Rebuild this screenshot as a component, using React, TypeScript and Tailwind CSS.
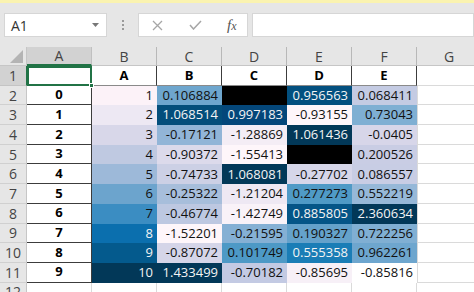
import React from "react";

type Cell = { v: string; bg: string; light?: boolean };

const W = "#ffffff";
const cols = ["A", "B", "C", "D", "E", "F", "G"];
const heads = ["", "A", "B", "C", "D", "E"];

// value, background, white text?
const data: Cell[][] = [
  [{ v: "1", bg: "#fcf2f8" }, { v: "0.106884", bg: "#6ea6ce" }, { v: "", bg: "#000000" }, { v: "0.956563", bg: "#03507f", light: true }, { v: "0.068411", bg: "#c4cbe3" }],
  [{ v: "2", bg: "#ede8f3" }, { v: "1.068514", bg: "#034e7b", light: true }, { v: "0.997183", bg: "#04477a", light: true }, { v: "-0.93155", bg: "#fef6fa" }, { v: "0.73043", bg: "#7fafd3" }],
  [{ v: "3", bg: "#d8d7e9" }, { v: "-0.17121", bg: "#92b5d7" }, { v: "-1.28869", bg: "#f4edf5" }, { v: "1.061436", bg: "#023858", light: true }, { v: "-0.0405", bg: "#d7d6e9" }],
  [{ v: "4", bg: "#bfc9e1" }, { v: "-0.90372", bg: "#dcdaeb" }, { v: "-1.55413", bg: "#fef6fa" }, { v: "", bg: "#000000" }, { v: "0.200526", bg: "#c9cde4" }],
  [{ v: "5", bg: "#9db9d9" }, { v: "-0.74733", bg: "#ccd0e5" }, { v: "1.068081", bg: "#023858", light: true }, { v: "-0.27702", bg: "#d6d6e9" }, { v: "0.086557", bg: "#c8cde4" }],
  [{ v: "6", bg: "#6ca4cd" }, { v: "-0.25322", bg: "#a7bedb" }, { v: "-1.21204", bg: "#eee8f3" }, { v: "0.277273", bg: "#4f9ac6" }, { v: "0.552219", bg: "#96b8d8" }],
  [{ v: "7", bg: "#3b8dc2" }, { v: "-0.46774", bg: "#bdc8e1" }, { v: "-1.42749", bg: "#f9f2f8" }, { v: "0.885805", bg: "#045587", light: true }, { v: "2.360634", bg: "#023858", light: true }],
  [{ v: "8", bg: "#0b6fae", light: true }, { v: "-1.52201", bg: "#fef6fa" }, { v: "-0.21595", bg: "#85b0d4" }, { v: "0.190327", bg: "#65a2cb" }, { v: "0.722256", bg: "#80afd3" }],
  [{ v: "9", bg: "#045a8d", light: true }, { v: "-0.87072", bg: "#d5d5e8" }, { v: "0.101749", bg: "#4d99c6" }, { v: "0.555358", bg: "#1a7db6", light: true }, { v: "0.962261", bg: "#6ea6ce" }],
  [{ v: "10", bg: "#023858", light: true }, { v: "1.433499", bg: "#023858", light: true }, { v: "-0.70182", bg: "#c3cae3" }, { v: "-0.85695", bg: "#f7f0f7" }, { v: "-0.85816", bg: W }],
];

function RowHead({ n, active }: { n: number; active?: boolean }) {
  return (
    <div
      className={
        "w-[27px] shrink-0 flex items-center justify-center border-b border-r text-[14px] text-[#444] " +
        (active ? "bg-[#d2d2d2] border-b-[#c4c4c4] border-r-[#217346]" : "bg-[#e6e6e6] border-b-[#d0d0d0] border-r-[#c6c6c6]")
      }
    >
      {n}
    </div>
  );
}

export default function App() {
  return (
    <div className="w-[474px] h-[292px] overflow-hidden bg-white font-['Open_Sans',sans-serif] text-black">
      <div className="h-[3px] bg-[#faf3b0]" />

      {/* formula bar */}
      <div className="h-[44px] bg-[#e6e6e6] flex items-start pt-[10px] pl-[4px]">
        <div className="w-[103px] h-[24px] bg-white border border-[#d6d6d6] flex items-center justify-between pl-[6px] pr-[7px]">
          <span className="text-[14px] text-[#333]">A1</span>
          <svg width="7" height="4" viewBox="0 0 7 4">
            <path d="M0 0h7L3.5 4z" fill="#777" />
          </svg>
        </div>
        <div className="w-[31px] h-[24px] flex flex-col items-center justify-center gap-[2px]">
          <div className="w-[2px] h-[2px] bg-[#9a9a9a]" />
          <div className="w-[2px] h-[2px] bg-[#9a9a9a]" />
          <div className="w-[2px] h-[2px] bg-[#9a9a9a]" />
        </div>
        <div className="w-[110px] h-[24px] bg-white border border-[#d6d6d6] flex items-center">
          <svg className="ml-[13px]" width="11" height="11" viewBox="0 0 11 11">
            <path d="M1 1l9 9M10 1l-9 9" stroke="#a6a6a6" strokeWidth="1.3" />
          </svg>
          <svg className="ml-[26px]" width="13" height="10" viewBox="0 0 13 10">
            <path d="M1 5l3.5 4L12 1" stroke="#a6a6a6" strokeWidth="1.5" fill="none" />
          </svg>
          <span className="ml-[25px] text-[15px] leading-none italic text-[#555] font-['Liberation_Serif',serif]">
            f<span className="text-[12px]">x</span>
          </span>
        </div>
        <div className="ml-[4px] flex-1 h-[24px] bg-white border border-[#d6d6d6]" />
      </div>

      {/* column headers */}
      <div className="flex h-[19px]">
        <div className="w-[27px] shrink-0 bg-[#e6e6e6] border-r border-b border-[#c6c6c6] flex items-end justify-end pr-[3px] pb-[2px]">
          <svg width="13" height="13" viewBox="0 0 13 13">
            <path d="M13 0v13H0z" fill="#b4b4b4" />
          </svg>
        </div>
        {cols.map((c, i) => (
          <div
            key={c}
            className={
              "w-[65px] shrink-0 flex items-center justify-center text-[14px] text-[#444] border-r " +
              (i === 0
                ? "bg-[#d2d2d2] border-b-2 border-b-[#217346] border-r-[#c0c0c0]"
                : "bg-[#e6e6e6] border-b border-b-[#c6c6c6] border-r-[#b8b8b8]")
            }
          >
            {c}
          </div>
        ))}
      </div>

      {/* row 1: frame header */}
      <div className="flex h-[19.7px]">
        <RowHead n={1} active />
        <div className="relative w-[65px] shrink-0 border-2 border-[#217346] bg-white">
          <div className="absolute -right-[4px] -bottom-[4px] w-[5px] h-[5px] bg-[#217346] border border-white" />
        </div>
        {heads.slice(1).map((h) => (
          <div
            key={h}
            className="w-[65px] shrink-0 flex items-center justify-center text-[13px] font-bold border-r border-b border-r-[#3c3c3c] border-b-[#8a8a8a]"
          >
            {h}
          </div>
        ))}
        <div className="w-[65px] shrink-0 border-b border-[#dadada]" />
      </div>

      {data.map((row, r) => (
        <div key={r} className="flex h-[19.7px]">
          <RowHead n={r + 2} />
          <div className="w-[65px] shrink-0 flex items-center justify-center text-[13px] font-bold border-r border-b border-[#3c3c3c]">
            {r}
          </div>
          {row.map((c, k) => (
            <div
              key={k}
              className={
                "w-[65px] shrink-0 flex items-center justify-end pr-[4px] text-[13px] " +
                (c.light ? "text-[#f4f4f4]" : "text-[#111]")
              }
              style={{ backgroundColor: c.bg }}
            >
              {c.v}
            </div>
          ))}
          <div className="w-[65px] shrink-0 border-b border-l border-[#dadada]" />
        </div>
      ))}

      {/* row 12 */}
      <div className="flex h-[19.7px]">
        <RowHead n={12} />
        {cols.map((c) => (
          <div key={c} className="w-[65px] shrink-0 border-r border-b border-[#dadada]" />
        ))}
      </div>
    </div>
  );
}
